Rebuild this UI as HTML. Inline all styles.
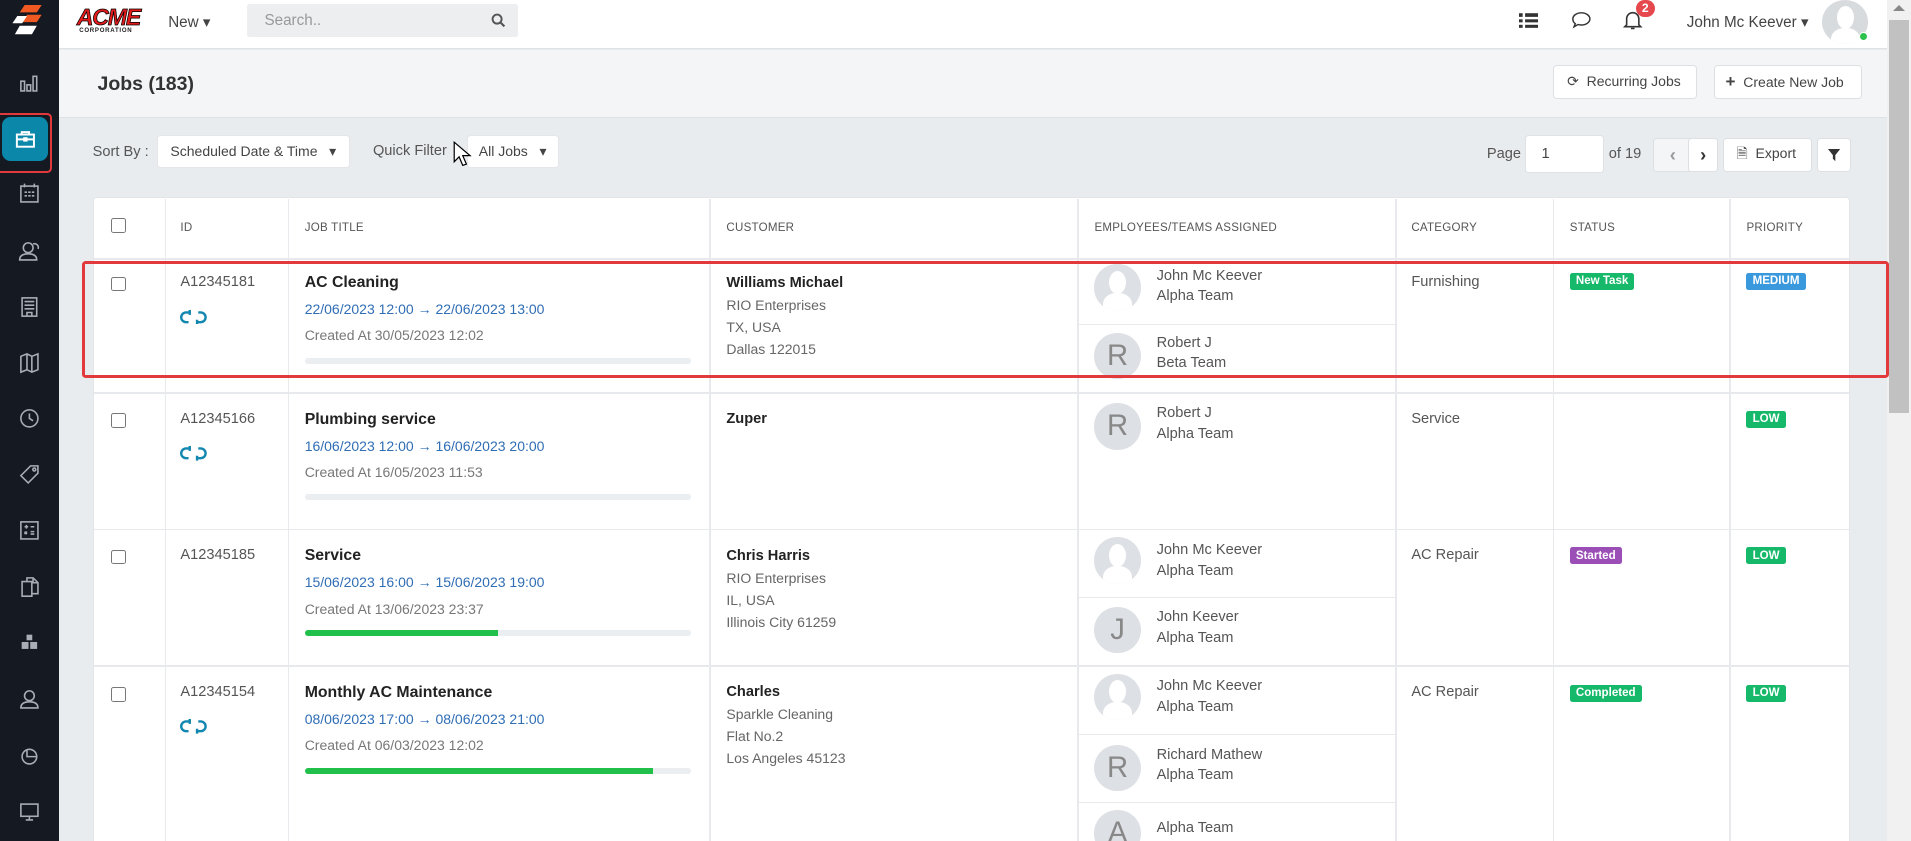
<!DOCTYPE html>
<html><head><meta charset="utf-8">
<style>
*{box-sizing:border-box;margin:0;padding:0}
html,body{width:1911px;height:841px;overflow:hidden;background:#e9ecef}
#w{position:relative;width:1568px;height:690px;zoom:1.21875;font-family:"Liberation Sans",sans-serif;color:#333;font-size:12px;overflow:hidden;background:#e9ecef}
.a{position:absolute}
.sb{left:0;top:0;width:48px;height:690px;background:#151922}
.ic{position:absolute;left:13px;width:22px;height:22px}
.ic svg{width:22px;height:22px;fill:none;stroke:#a9adb5;stroke-width:1.3}
.top{left:48px;top:0;width:1500px;height:40px;background:#fff;border-bottom:1px solid #e0e3e6}
.hdr{left:48px;top:41px;width:1500px;height:56px;background:#f4f5f6;border-bottom:1px solid #dfe2e5}
.btn{position:absolute;background:#fff;border:1px solid #dde0e3;border-radius:3px;font-size:12px;color:#444;display:flex;align-items:center;white-space:nowrap}
.card{left:76px;top:162px;width:1442px;height:540px;background:#fff;border:1px solid #e3e6e9;border-radius:3px}
.th{position:absolute;top:182px;font-size:9.5px;color:#555;letter-spacing:.2px}
.vl{position:absolute;top:163px;height:527px;width:1px;background:#e7e9ec}
.hl{position:absolute;height:1px;background:#e7e9ec}
.cb{position:absolute;left:91px;width:12px;height:12px;border:1px solid #777;border-radius:2px;background:#fff}
.id{position:absolute;left:148px;font-size:12px;color:#555}
.t{position:absolute;left:250px;font-size:13px;font-weight:bold;color:#222}
.d{position:absolute;left:250px;font-size:11.5px;color:#2f6db5}
.c{position:absolute;left:250px;font-size:11.5px;color:#777}
.bar{position:absolute;left:250px;width:317px;height:5px;background:#ebeef0;border-radius:3px;overflow:hidden}
.bar i{display:block;height:5px;background:#21c04a}
.cu{position:absolute;left:596px;font-size:11.5px;color:#666;line-height:18px}
.cu b{color:#222;font-size:12px}
.av{position:absolute;left:898px;width:38px;height:38px;border-radius:50%;background:#dde0e4;color:#888;font-size:24px;text-align:center;line-height:38px;overflow:hidden}
.ph::before{content:"";position:absolute;left:12px;top:5px;width:14px;height:19px;border-radius:50%;background:#fff}
.ph::after{content:"";position:absolute;left:7px;top:23px;width:24px;height:20px;border-radius:45% 45% 0 0;background:#fff}
.en{position:absolute;left:949px;font-size:12px;color:#555;line-height:17px}
.cat{position:absolute;left:1158px;font-size:12px;color:#555}
.bd{position:absolute;font-size:9.5px;font-weight:bold;color:#fff;padding:2px 5px;border-radius:2px}
.rep{position:absolute;left:148px;width:22px;height:12px}
</style></head><body><div id="w">
<div class="a sb">
 <svg class="a" style="left:8px;top:4px" width="30" height="28" viewBox="0 0 30 28"><polygon points="12,0 26,0 22,6 8,6" fill="#f05a22"/><polygon points="14,8 26,8 22,14 10,14" fill="#f05a22"/><polygon points="6,9 14,9 10,15 2,15" fill="#fff"/><polygon points="8,17 22,17 18,24 4,24" fill="#fff"/></svg>
 <div class="ic" style="top:57px"><svg viewBox="0 0 22 22"><rect x="4" y="10" width="3" height="8"/><rect x="9" y="13" width="3" height="5"/><rect x="14" y="6" width="3" height="12"/></svg></div>
 <div class="a" style="left:0;top:93px;width:43px;height:49px;border:2px solid #e2393c;border-left:none;border-radius:0 4px 4px 0"></div>
 <div class="a" style="left:2px;top:96px;width:37px;height:36px;background:#0b87aa;border-radius:7px"></div>
 <div class="ic" style="top:103px;left:10px"><svg viewBox="0 0 22 22" style="stroke:#fff;stroke-width:1.6"><rect x="4" y="7" width="14" height="10"/><path d="M8 7V5h6v2M4 11h14"/><rect x="10" y="10" width="2" height="2" fill="#fff"/></svg></div>
 <div class="ic" style="top:148px"><svg viewBox="0 0 22 22"><rect x="4" y="5" width="14" height="13"/><path d="M7 3v3M15 3v3M7 10h2M10 10h2M13 10h2M7 13h2M10 13h2M13 13h2"/></svg></div>
 <div class="ic" style="top:195px"><svg viewBox="0 0 22 22"><circle cx="10" cy="8" r="4"/><path d="M3 18c0-4 3-5 7-5s7 1 7 5z"/><path d="M14 5a3 3 0 0 1 4 4"/></svg></div>
 <div class="ic" style="top:240px"><svg viewBox="0 0 22 22"><rect x="5" y="4" width="12" height="15"/><path d="M7 7h8M7 10h8M7 13h8M9 19v-3h4v3"/></svg></div>
 <div class="ic" style="top:286px"><svg viewBox="0 0 22 22"><path d="M4 6l5-2 4 2 5-2v13l-5 2-4-2-5 2zM9 4v13M13 6v13"/></svg></div>
 <div class="ic" style="top:332px"><svg viewBox="0 0 22 22"><circle cx="11" cy="11" r="7"/><path d="M11 7v4l3 2"/></svg></div>
 <div class="ic" style="top:378px"><svg viewBox="0 0 22 22"><path d="M4 12l8-8h6v6l-8 8z"/><circle cx="15" cy="7" r="1.2"/></svg></div>
 <div class="ic" style="top:424px"><svg viewBox="0 0 22 22"><rect x="4" y="4" width="14" height="14"/><path d="M7 8h3M8.5 6.5v3M12 8h3M7 12l2 2M9 12l-2 2M12 12h3M12 14h3"/></svg></div>
 <div class="ic" style="top:470px"><svg viewBox="0 0 22 22"><path d="M5 7h8v12H5zM9 7V4h5l4 4v9h-5M14 4v4h4"/></svg></div>
 <div class="ic" style="top:516px"><svg viewBox="0 0 22 22" style="fill:#a9adb5;stroke:#151922"><rect x="8" y="4" width="6" height="6"/><rect x="4" y="10" width="7" height="7"/><rect x="11" y="10" width="7" height="7"/></svg></div>
 <div class="ic" style="top:563px"><svg viewBox="0 0 22 22"><circle cx="11" cy="8" r="4"/><path d="M4 18c0-4 3-5 7-5s7 1 7 5z"/></svg></div>
 <div class="ic" style="top:609px"><svg viewBox="0 0 22 22"><circle cx="11" cy="12" r="6"/><path d="M9 6v6h8"/></svg></div>
 <div class="ic" style="top:655px"><svg viewBox="0 0 22 22"><rect x="4" y="5" width="14" height="10"/><path d="M11 15v3M8 18h6"/></svg></div>
</div>
<div class="a top">
 <div class="a" style="left:15px;top:3px;font:900 italic 19px 'Liberation Sans';color:#e21c1c;letter-spacing:-1px;-webkit-text-stroke:.6px #000">ACME</div>
 <div class="a" style="left:17px;top:22px;font:bold 5px 'Liberation Sans';color:#222;letter-spacing:.6px">CORPORATION</div>
 <div class="a" style="left:90px;top:11px;font-size:12.5px;color:#444">New ▾</div>
 <div class="a" style="left:155px;top:3px;width:222px;height:27px;background:#eceef0;border-radius:2px"><span class="a" style="left:14px;top:7px;font-size:12.5px;color:#999">Search..</span>
 <svg class="a" style="left:200px;top:8px" width="12" height="12" viewBox="0 0 12 12"><circle cx="5" cy="5" r="3.7" fill="none" stroke="#555" stroke-width="1.6"/><path d="M8 8l3 3" stroke="#555" stroke-width="1.8"/></svg></div>
 <svg class="a" style="left:1198px;top:10px" width="16" height="14" viewBox="0 0 16 14" fill="#333"><rect x="0" y="1" width="3" height="3"/><rect x="5" y="1" width="11" height="3"/><rect x="0" y="6" width="3" height="2.5"/><rect x="5" y="6" width="11" height="2.5"/><rect x="0" y="10.5" width="3" height="2.5"/><rect x="5" y="10.5" width="11" height="2.5"/></svg>
 <svg class="a" style="left:1241px;top:9px" width="17" height="15" viewBox="0 0 17 15"><path d="M8.5 1.5c4 0 7 2.3 7 5s-3 5-7 5c-1 0-2 0-2.8-.4L2.5 13l1-2.6C2 9.4 1.5 8 1.5 6.5c0-2.7 3-5 7-5z" fill="none" stroke="#333" stroke-width="1.2"/></svg>
 <svg class="a" style="left:1284px;top:7px" width="16" height="18" viewBox="0 0 16 18"><path d="M3 13V8a5 5 0 0 1 10 0v5l1.5 1.5h-13zM6.5 16h3" fill="none" stroke="#333" stroke-width="1.3"/></svg>
 <div class="a" style="left:1294px;top:0;width:16px;height:14px;border-radius:8px;background:#e5484d;color:#fff;font-size:10px;font-weight:bold;text-align:center;line-height:14px">2</div>
 <div class="a" style="left:1336px;top:11px;font-size:12.5px;color:#444">John Mc Keever ▾</div>
 <div class="a ph" style="left:1447px;top:0;width:38px;height:36px;border-radius:50%;background:#d8dbde;overflow:hidden"></div>
 <div class="a" style="left:1477px;top:26px;width:8px;height:8px;border-radius:50%;background:#2cc14b;border:1px solid #fff"></div>
</div>
<div class="a" style="left:1548px;top:0;width:20px;height:690px;background:#f1f1f1"><div class="a" style="left:2px;top:16px;width:16px;height:323px;background:#c1c1c1"></div><div class="a" style="left:5px;top:4px;border:5px solid transparent;border-bottom:5px solid #888;border-top:none"></div></div>
<div class="a hdr"><div class="a" style="left:32px;top:19px;font-size:16px;font-weight:bold;color:#333">Jobs (183)</div></div>
<div class="btn" style="left:1274px;top:53px;width:118px;height:28px;padding-left:11px;font-size:11.5px">⟳&nbsp;&nbsp;Recurring Jobs</div>
<div class="btn" style="left:1406px;top:53px;width:122px;height:28px;padding-left:9px;font-size:11.5px"><b style="font-size:14px">+</b>&nbsp;&nbsp;Create New Job</div>
<div class="a" style="left:76px;top:118px;font-size:12px;color:#555">Sort By :</div>
<div class="btn" style="left:129px;top:111px;width:158px;height:27px;padding-left:10px;border-color:#e4e6e9;font-size:11.5px">Scheduled Date &amp; Time&nbsp;&nbsp;&nbsp;▾</div>
<div class="a" style="left:306px;top:117px;font-size:12px;color:#555">Quick Filter</div>
<div class="btn" style="left:383px;top:111px;width:76px;height:27px;padding-left:9px;border-color:#e4e6e9;font-size:11.5px">All Jobs&nbsp;&nbsp;&nbsp;▾</div>
<svg class="a" style="left:372px;top:116px" width="16" height="22" viewBox="0 0 16 22"><path d="M1 1v16l4-4 3 7 3-1-3-7h6z" fill="#fff" stroke="#000" stroke-width="1"/></svg>
<div class="a" style="left:1220px;top:120px;font-size:12px;color:#555">Page</div>
<div class="btn" style="left:1251px;top:111px;width:65px;height:31px;padding-left:13px;border-color:#dfe2e5">1</div>
<div class="a" style="left:1320px;top:120px;font-size:12px;color:#555">of 19</div>
<div class="btn" style="left:1356px;top:113px;width:33px;height:28px;background:#f4f5f6;justify-content:center;color:#999;font-weight:bold;font-size:15px">‹</div>
<div class="btn" style="left:1385px;top:113px;width:25px;height:28px;justify-content:center;color:#333;font-weight:bold;font-size:15px">›</div>
<div class="btn" style="left:1414px;top:113px;width:73px;height:28px;padding-left:10px;font-size:11.5px">🗎&nbsp;&nbsp;Export</div>
<div class="btn" style="left:1491px;top:113px;width:28px;height:28px;justify-content:center"><svg width="10" height="10" viewBox="0 0 10 10"><path d="M0 0h10L6 5v5L4 8V5z" fill="#333"/></svg></div>
<div class="a card"></div>
<div class="vl" style="left:135px"></div><div class="vl" style="left:236px"></div><div class="vl" style="left:582px"></div><div class="vl" style="left:884px"></div><div class="vl" style="left:1145px"></div><div class="vl" style="left:1274px"></div><div class="vl" style="left:1419px"></div>
<div class="hl" style="left:77px;top:212px;width:1440px"></div>
<div class="hl" style="left:77px;top:322px;width:1440px"></div>
<div class="hl" style="left:77px;top:434px;width:1440px"></div>
<div class="hl" style="left:77px;top:546px;width:1440px"></div>
<div class="hl" style="left:885px;top:266px;width:260px"></div>
<div class="hl" style="left:885px;top:490px;width:260px"></div>
<div class="hl" style="left:885px;top:602px;width:260px"></div>
<div class="hl" style="left:885px;top:658px;width:260px"></div>
<div class="cb" style="top:179px"></div>
<div class="th" style="left:148px">ID</div><div class="th" style="left:250px">JOB TITLE</div><div class="th" style="left:596px">CUSTOMER</div><div class="th" style="left:898px">EMPLOYEES/TEAMS ASSIGNED</div><div class="th" style="left:1158px">CATEGORY</div><div class="th" style="left:1288px">STATUS</div><div class="th" style="left:1433px">PRIORITY</div>

<div class="cb" style="top:227px"></div><div class="id" style="top:225px">A12345181</div>
<svg class="rep" style="top:254px" viewBox="0 0 22 12"><path d="M8 2H5a4 4 0 0 0 0 8h2M14 10h3a4 4 0 0 0 0-8h-2M8 0v4M14 8v4" fill="none" stroke="#1287b0" stroke-width="2"/></svg>
<div class="t" style="top:225px">AC Cleaning</div><div class="d" style="top:247px">22/06/2023 12:00 → 22/06/2023 13:00</div><div class="c" style="top:268px">Created At 30/05/2023 12:02</div><div class="bar" style="top:294px"><i style="width:0"></i></div>
<div class="cu" style="top:223px"><b>Williams Michael</b><br>RIO Enterprises<br>TX, USA<br>Dallas 122015</div>
<div class="av ph" style="top:217px"></div><div class="en" style="top:218px">John Mc Keever<br>Alpha Team</div>
<div class="av" style="top:273px">R</div><div class="en" style="top:273px">Robert J<br>Beta Team</div>
<div class="cat" style="top:225px">Furnishing</div>
<div class="bd" style="left:1288px;top:224px;background:#16b86a">New Task</div><div class="bd" style="left:1433px;top:224px;background:#3a99dc">MEDIUM</div>

<div class="cb" style="top:339px"></div><div class="id" style="top:337px">A12345166</div>
<svg class="rep" style="top:366px" viewBox="0 0 22 12"><path d="M8 2H5a4 4 0 0 0 0 8h2M14 10h3a4 4 0 0 0 0-8h-2M8 0v4M14 8v4" fill="none" stroke="#1287b0" stroke-width="2"/></svg>
<div class="t" style="top:337px">Plumbing service</div><div class="d" style="top:359px">16/06/2023 12:00 → 16/06/2023 20:00</div><div class="c" style="top:381px">Created At 16/05/2023 11:53</div><div class="bar" style="top:405px"><i style="width:0"></i></div>
<div class="cu" style="top:335px"><b>Zuper</b></div>
<div class="av" style="top:331px">R</div><div class="en" style="top:331px">Robert J<br>Alpha Team</div>
<div class="cat" style="top:337px">Service</div>
<div class="bd" style="left:1433px;top:337px;background:#16b86a">LOW</div>

<div class="cb" style="top:451px"></div><div class="id" style="top:449px">A12345185</div>
<div class="t" style="top:449px">Service</div><div class="d" style="top:471px">15/06/2023 16:00 → 15/06/2023 19:00</div><div class="c" style="top:493px">Created At 13/06/2023 23:37</div><div class="bar" style="top:517px"><i style="width:159px"></i></div>
<div class="cu" style="top:447px"><b>Chris Harris</b><br>RIO Enterprises<br>IL, USA<br>Illinois City 61259</div>
<div class="av ph" style="top:441px"></div><div class="en" style="top:443px">John Mc Keever<br>Alpha Team</div>
<div class="av" style="top:498px">J</div><div class="en" style="top:498px">John Keever<br>Alpha Team</div>
<div class="cat" style="top:449px">AC Repair</div>
<div class="bd" style="left:1288px;top:449px;background:#9b4fb6">Started</div><div class="bd" style="left:1433px;top:449px;background:#16b86a">LOW</div>

<div class="cb" style="top:564px"></div><div class="id" style="top:561px">A12345154</div>
<svg class="rep" style="top:590px" viewBox="0 0 22 12"><path d="M8 2H5a4 4 0 0 0 0 8h2M14 10h3a4 4 0 0 0 0-8h-2M8 0v4M14 8v4" fill="none" stroke="#1287b0" stroke-width="2"/></svg>
<div class="t" style="top:561px">Monthly AC Maintenance</div><div class="d" style="top:583px">08/06/2023 17:00 → 08/06/2023 21:00</div><div class="c" style="top:605px">Created At 06/03/2023 12:02</div><div class="bar" style="top:630px"><i style="width:286px"></i></div>
<div class="cu" style="top:559px"><b>Charles</b><br>Sparkle Cleaning<br>Flat No.2<br>Los Angeles 45123</div>
<div class="av ph" style="top:553px"></div><div class="en" style="top:555px">John Mc Keever<br>Alpha Team</div>
<div class="av" style="top:611px">R</div><div class="en" style="top:611px">Richard Mathew<br>Alpha Team</div>
<div class="av" style="top:665px">A</div><div class="en" style="top:671px">Alpha Team</div>
<div class="cat" style="top:561px">AC Repair</div>
<div class="bd" style="left:1288px;top:562px;background:#16b86a">Completed</div><div class="bd" style="left:1433px;top:562px;background:#16b86a">LOW</div>

<div class="a" style="left:67px;top:214px;width:1483px;height:96px;border:3px solid #e2393c;border-radius:3px"></div>
</div></body></html>
